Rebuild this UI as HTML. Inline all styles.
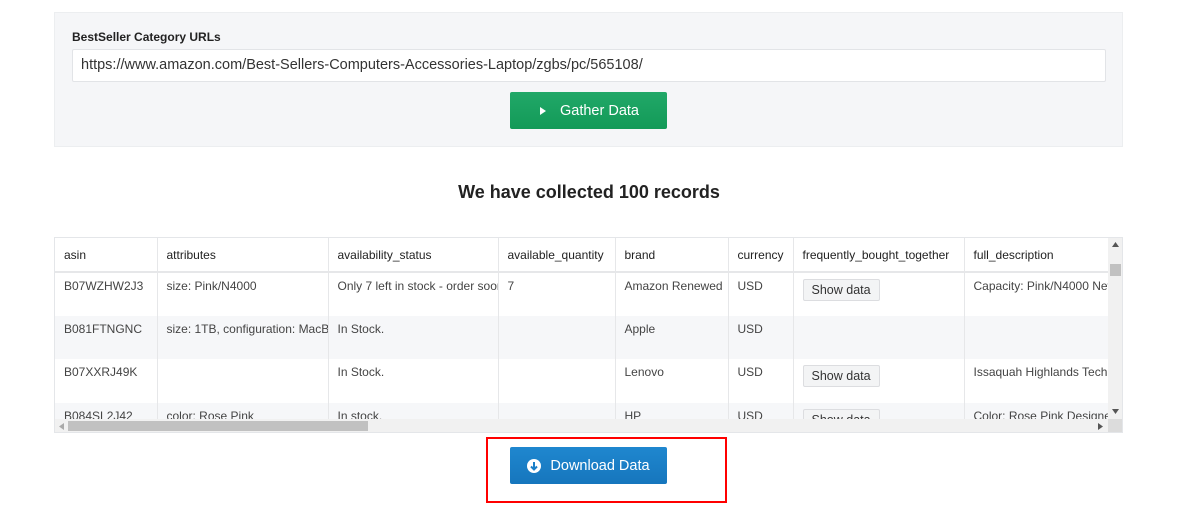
<!DOCTYPE html>
<html><head><meta charset="utf-8"><style>
*{box-sizing:border-box;margin:0;padding:0}
body{width:1200px;height:518px;background:#fff;font-family:"Liberation Sans",sans-serif;color:#333;position:relative;overflow:hidden}
.a{position:absolute}
.panel{left:54px;top:12px;width:1069px;height:135px;background:#f5f6f8;border:1px solid #eceef0}
.lbl{left:72px;top:30px;font-size:12px;font-weight:bold;color:#222}
.inp{left:72px;top:49px;width:1034px;height:33px;background:#fff;border:1px solid #e2e4e7;border-radius:2px;font-size:14.5px;color:#333;padding:7px 0 0 8px}
.btn{width:157px;height:37px;border-radius:2px;color:#fff;font-size:14.5px;display:flex;align-items:center;justify-content:center}
.g{left:510px;top:92px;background:linear-gradient(#21a868,#139a58)}
.b{left:510px;top:447px;background:linear-gradient(#1f87cf,#1676bd)}
h2{position:absolute;left:0;width:1178px;top:182px;text-align:center;font-size:18px;font-weight:bold;color:#222}
.tbl{left:54px;top:237px;width:1069px;height:196px;border:1px solid #e4e6e9;overflow:hidden;background:#fff}
table{border-collapse:collapse;font-size:12px;table-layout:fixed;position:absolute;left:0;top:0;width:1053px}
td,th{border-left:1px solid #e6e7e9;padding:0 9px;text-align:left;white-space:nowrap;overflow:hidden;vertical-align:top}
td:first-child,th:first-child{border-left:none}
th{height:34px;font-weight:normal;color:#222;vertical-align:middle;border-bottom:2px solid #e6e7e9}
td{height:43.5px;padding-top:6px;color:#444}
tr.s td{background:#f6f7f9}
.sd{display:inline-block;background:#f3f4f5;border:1px solid #dcdde0;border-radius:2px;padding:3px 8px;font-size:12.5px;color:#333}
.vs{left:1053px;top:0;width:15px;height:181px;background:#f1f1f1}
.hs{left:0;top:181px;width:1068px;height:14px;background:#f1f1f1}
.red{left:486px;top:437px;width:241px;height:66px;border:2px solid #f00}
</style></head><body>
<div class="a panel"></div>
<div class="a lbl">BestSeller Category URLs</div>
<div class="a inp">https://www.amazon.com/Best-Sellers-Computers-Accessories-Laptop/zgbs/pc/565108/</div>
<div class="a btn g"><svg width="10" height="10" style="margin-right:12px"><path d="M2 1L8 5L2 9Z" fill="#fff"/></svg>Gather Data</div>
<h2>We have collected 100 records</h2>
<div class="a tbl">
<table>
<colgroup><col style="width:102px"><col style="width:171px"><col style="width:170px"><col style="width:117px"><col style="width:113px"><col style="width:65px"><col style="width:171px"><col style="width:144px"></colgroup>
<tr><th>asin</th><th>attributes</th><th>availability_status</th><th>available_quantity</th><th>brand</th><th>currency</th><th>frequently_bought_together</th><th>full_description</th></tr>
<tr><td>B07WZHW2J3</td><td>size: Pink/N4000</td><td>Only 7 left in stock - order soon.</td><td>7</td><td>Amazon Renewed</td><td>USD</td><td><span class="sd">Show data</span></td><td>Capacity: Pink/N4000 New</td></tr>
<tr class="s"><td>B081FTNGNC</td><td>size: 1TB, configuration: MacBook</td><td>In Stock.</td><td></td><td>Apple</td><td>USD</td><td></td><td></td></tr>
<tr><td>B07XXRJ49K</td><td></td><td>In Stock.</td><td></td><td>Lenovo</td><td>USD</td><td><span class="sd">Show data</span></td><td>Issaquah Highlands Tech s</td></tr>
<tr class="s"><td>B084SL2J42</td><td>color: Rose Pink</td><td>In stock.</td><td></td><td>HP</td><td>USD</td><td><span class="sd">Show data</span></td><td>Color: Rose Pink Designed</td></tr>
</table>
<div class="a vs"><svg class="a" style="left:4px;top:4px" width="7" height="5"><path d="M0 5L3.5 0L7 5Z" fill="#555"/></svg><div class="a" style="left:2px;top:26px;width:11px;height:12px;background:#c1c1c1"></div><svg class="a" style="left:4px;top:171px" width="7" height="5"><path d="M0 0L3.5 5L7 0Z" fill="#555"/></svg></div>
<div class="a hs"><svg class="a" style="left:4px;top:4px" width="5" height="7"><path d="M5 0L0 3.5L5 7Z" fill="#aaa"/></svg><div class="a" style="left:13px;top:2px;width:300px;height:10px;background:#c1c1c1"></div><svg class="a" style="left:1043px;top:4px" width="5" height="7"><path d="M0 0L5 3.5L0 7Z" fill="#555"/></svg><div class="a" style="left:1053px;top:0;width:15px;height:14px;background:#dcdcdc"></div></div>
</div>
<div class="a red"></div>
<div class="a btn b"><svg width="14" height="14" style="margin-right:9px"><circle cx="7" cy="7" r="7" fill="#fff"/><path d="M7 3V10M4 7.5L7 10.5L10 7.5" stroke="#1a7fc8" stroke-width="2" fill="none"/></svg>Download Data</div>
</body></html>
